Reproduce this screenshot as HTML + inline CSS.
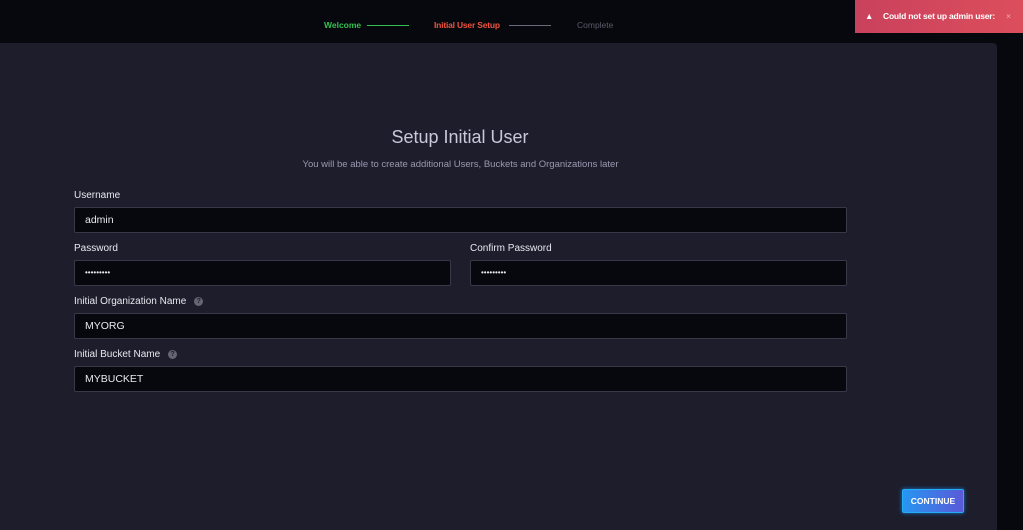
<!DOCTYPE html>
<html><head><style>
body{margin:0;width:1023px;height:530px;background:#07080d;font-family:"Liberation Sans",sans-serif;position:relative;overflow:hidden}
.abs{position:absolute}
.panel{left:0;top:43px;width:997px;height:487px;background:#1d1d2b;border-radius:0 4px 0 0}
.step{top:20px;font-size:8.5px;font-weight:bold}
.line{height:1px;top:25px;width:42px}
.lbl{color:#e8e8f0;font-size:10px;left:74px}
.in{background:#07080d;border:1px solid #383848;border-radius:2px;box-sizing:border-box;height:26px;color:#e8e8f0;font-size:10.5px;line-height:24px;padding-left:10px}
.q{display:inline-block;width:9px;height:9px;border-radius:50%;background:#656574;color:#1d1d2b;font-size:7px;text-align:center;line-height:9px;font-weight:bold;vertical-align:middle;margin-left:8px}
.dots{font-size:8px}
</style></head><body>
<div class="abs panel"></div>
<div class="abs step" style="left:324px;color:#34c050">Welcome</div>
<div class="abs line" style="left:367px;background:#34c050"></div>
<div class="abs step" style="left:434px;color:#f0523e;letter-spacing:-0.2px">Initial User Setup</div>
<div class="abs line" style="left:509px;background:#6a6a78"></div>
<div class="abs step" style="left:577px;color:#5a5a6a;font-weight:normal">Complete</div>
<div class="abs" style="left:855px;top:0;width:168px;height:33px;background:linear-gradient(90deg,#c9415c,#dc4e5c);color:#fff;font-size:8.5px;font-weight:bold;line-height:33px">
<span style="position:absolute;left:10px">▲</span><span style="position:absolute;left:28px;letter-spacing:-0.2px">Could not set up admin user:</span><span style="position:absolute;left:151px;font-weight:normal;color:#f0b0b8">×</span></div>
<div class="abs" style="left:0;width:920px;top:127px;text-align:center;color:#c8c8da;font-size:18px">Setup Initial User</div>
<div class="abs" style="left:0;width:921px;top:159px;text-align:center;color:#9a9ab0;font-size:9.5px">You will be able to create additional Users, Buckets and Organizations later</div>
<div class="abs lbl" style="top:190px">Username</div>
<div class="abs in" style="left:74px;top:207px;width:773px">admin</div>
<div class="abs lbl" style="top:243px">Password</div>
<div class="abs lbl" style="top:243px;left:470px">Confirm Password</div>
<div class="abs in dots" style="left:74px;top:260px;width:377px">•••••••••</div>
<div class="abs in dots" style="left:470px;top:260px;width:377px">•••••••••</div>
<div class="abs lbl" style="top:296px">Initial Organization Name<span class="q">?</span></div>
<div class="abs in" style="left:74px;top:313px;width:773px">MYORG</div>
<div class="abs lbl" style="top:349px">Initial Bucket Name<span class="q">?</span></div>
<div class="abs in" style="left:74px;top:366px;width:773px">MYBUCKET</div>
<div class="abs" style="left:902px;top:489px;width:62px;height:24px;box-sizing:border-box;border:1px solid #22adf6;background:linear-gradient(90deg,#2596f0,#5a5ad8);color:#fff;font-size:8.5px;font-weight:bold;text-align:center;line-height:22px;border-radius:2px;box-shadow:0 0 4px #1b7ad0">CONTINUE</div>
</body></html>
